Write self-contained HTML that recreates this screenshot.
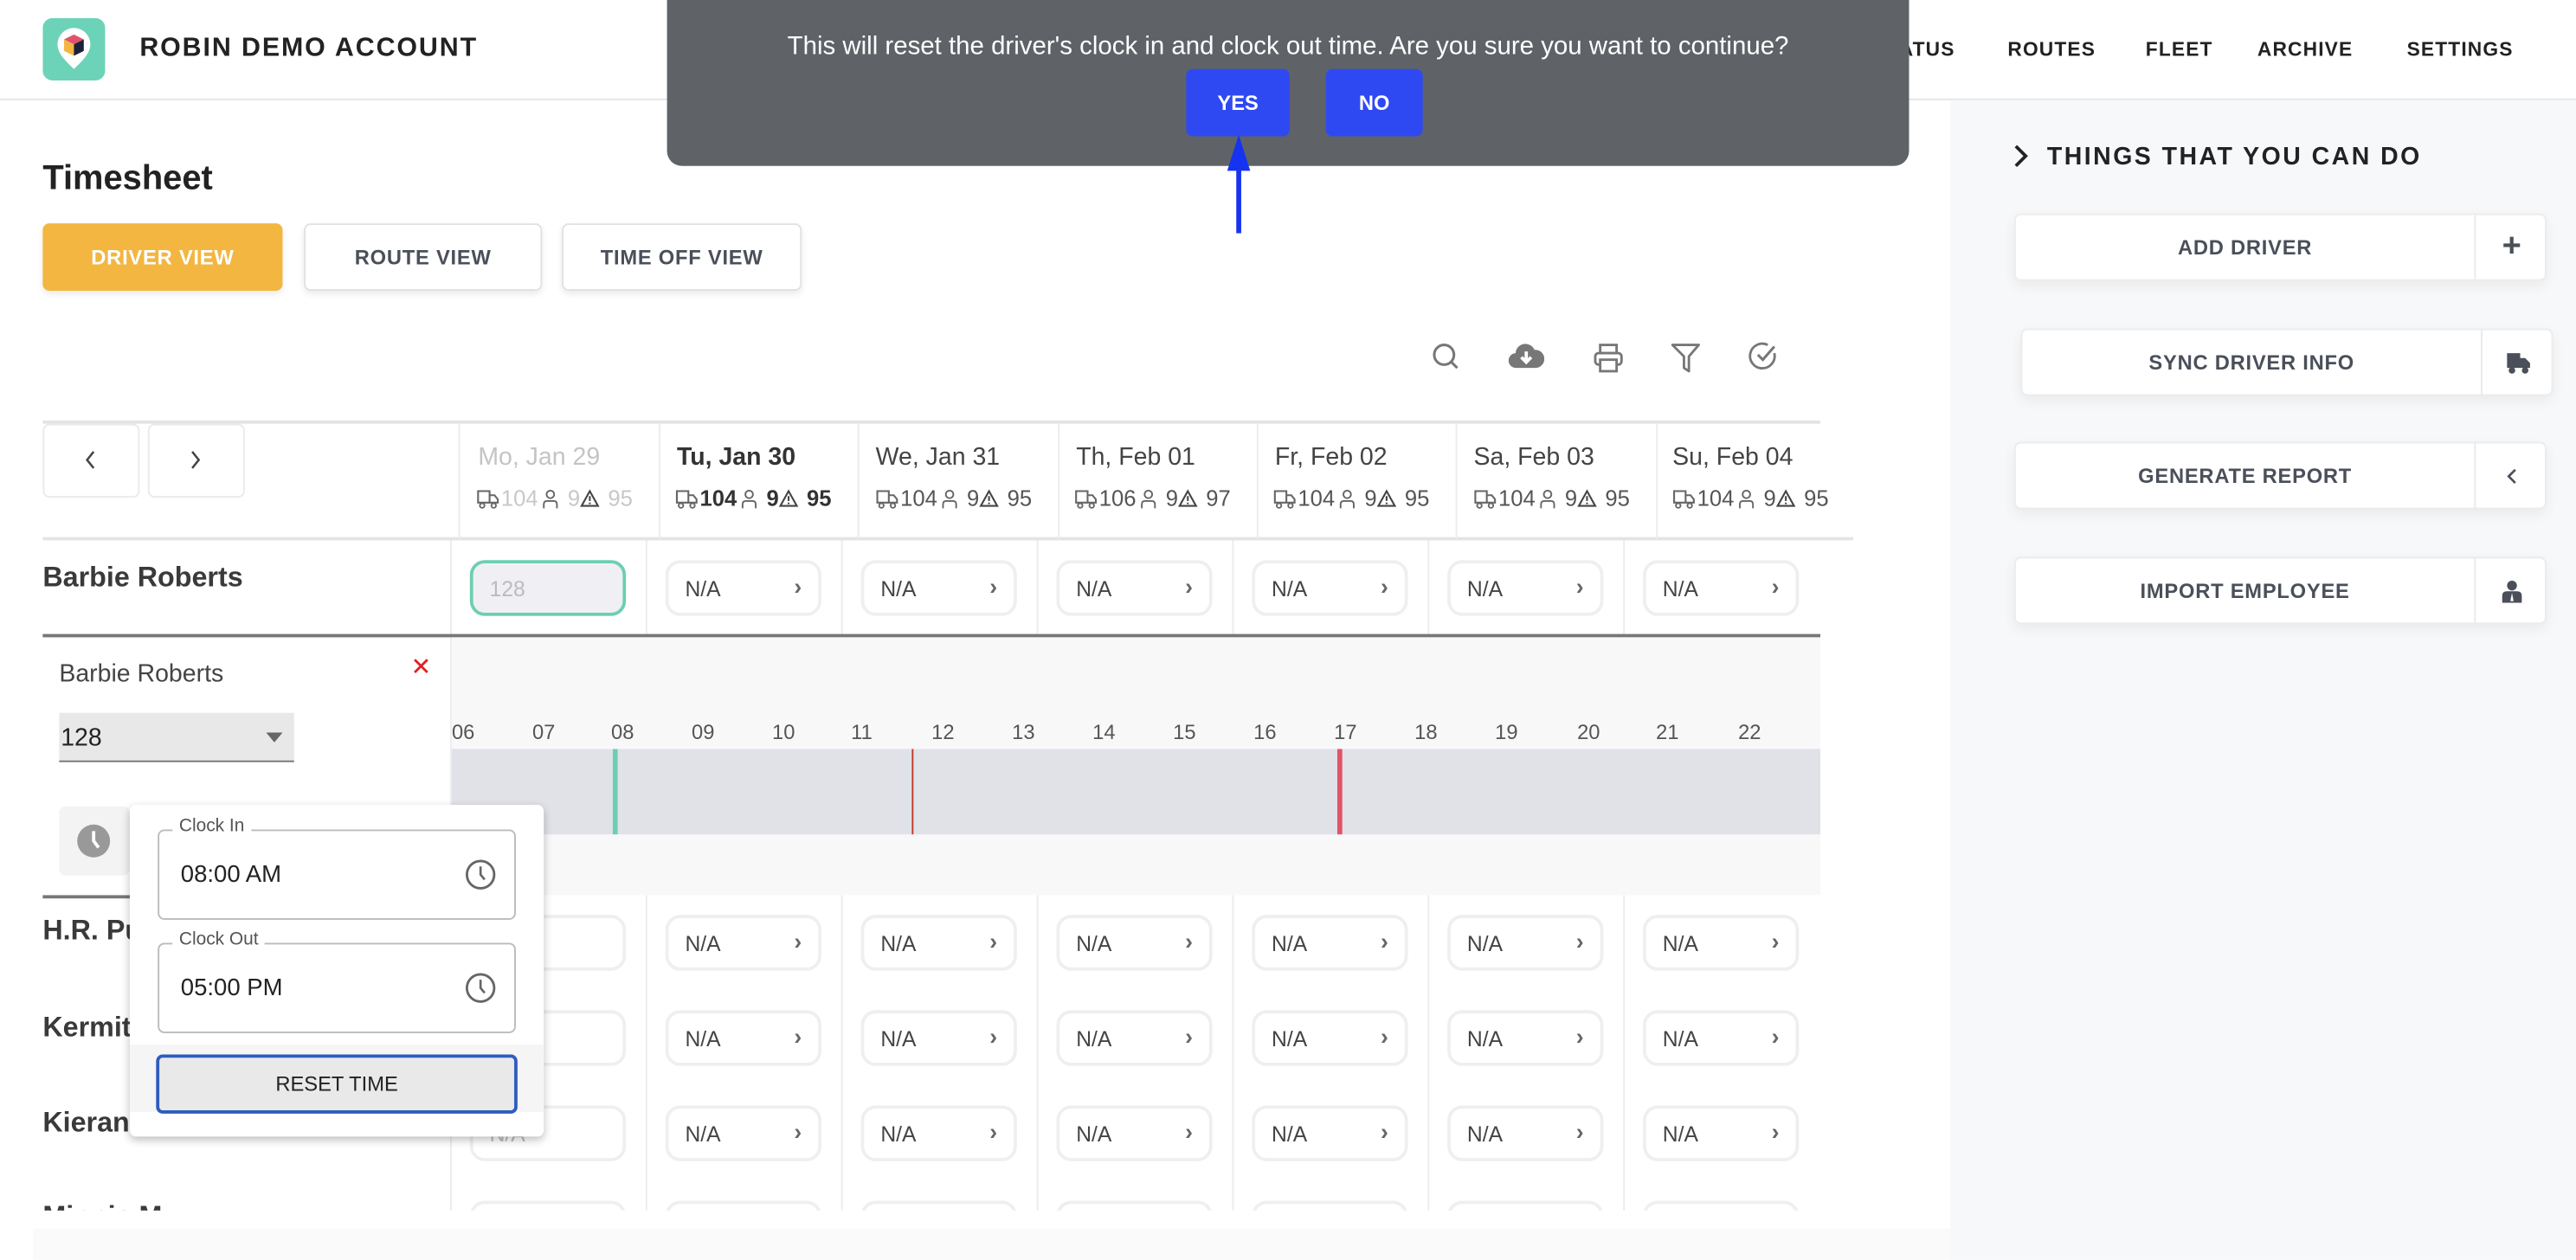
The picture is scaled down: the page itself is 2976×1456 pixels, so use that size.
<!DOCTYPE html>
<html><head><meta charset="utf-8">
<style>
*{margin:0;padding:0;box-sizing:border-box}
html,body{width:2976px;height:1455px;overflow:hidden;background:#fff}
#w{position:absolute;left:0;top:0;width:1568px;height:767px;transform:scale(1.8980);transform-origin:0 0;font-family:"Liberation Sans",sans-serif;color:#333}
.a{position:absolute}
.nav{font-size:12px;font-weight:bold;letter-spacing:.6px;color:#222;top:23px}
.btn{position:absolute;height:41px;border:1px solid #e2e2e2;border-radius:4px;background:#fff;font-size:12.5px;font-weight:bold;color:#4a4f5a;letter-spacing:.4px;display:flex;align-items:center;justify-content:center;box-shadow:0 2px 4px rgba(0,0,0,.08)}
.side{position:absolute;left:1226px;width:324px;height:41px;background:#fff;border:1px solid #ececec;border-radius:4px;box-shadow:0 3px 8px rgba(0,0,0,.06);font-size:12.5px;font-weight:bold;color:#4a4f5a;letter-spacing:.4px}
.side .t{position:absolute;left:0;width:279px;top:13px;text-align:center}
.side .d{position:absolute;left:279px;top:0;width:1px;height:100%;background:#eaeaea}
.side .i{position:absolute;left:280px;width:44px;top:0;height:100%;display:flex;align-items:center;justify-content:center}
.hd{position:absolute;top:270px;font-size:15px;color:#444}
.st{position:absolute;top:296px;font-size:13.5px;color:#555;white-space:nowrap;display:flex;align-items:center}
.st svg{margin-right:1px}
.st i{display:inline-block;width:4px}
.cell{position:absolute;width:95px;height:34px;border:2px solid #efeff2;border-radius:9px;background:#fff;font-size:13px;color:#444}
.cell span{position:absolute;left:10px;top:8px}
.cell b{position:absolute;right:10px;top:6px;font-size:14px;color:#666}
.vl{position:absolute;width:1px;background:#ececec}
.hr{position:absolute;top:439px;font-size:12.5px;color:#555}
.nm{position:absolute;left:26px;font-size:17px;font-weight:bold;color:#3a3a3a}
</style></head><body><div id="w">
<!-- header -->
<svg class="a" style="left:26px;top:11px" width="38" height="38" viewBox="0 0 38 38"><rect width="38" height="38" rx="6" fill="#6dd3b8"/><path d="M19 31 C15 27 9 22 9 16 A10 10 0 0 1 29 16 C29 22 23 27 19 31Z" fill="#fff"/><path d="M19 10 L25 13 L19 16 L13 13Z" fill="#e0536a"/><path d="M13 13 L19 16 L19 23 L13 20Z" fill="#f3b641"/><path d="M25 13 L19 16 L19 23 L25 20Z" fill="#1a2238"/></svg>
<div class="a" style="left:85px;top:21px;font-size:16px;font-weight:bold;letter-spacing:1px;color:#222">ROBIN DEMO ACCOUNT</div>
<div class="a nav" style="right:378px">STATUS</div>
<div class="a nav" style="left:1222px">ROUTES</div>
<div class="a nav" style="left:1306px">FLEET</div>
<div class="a nav" style="left:1374px">ARCHIVE</div>
<div class="a nav" style="left:1465px">SETTINGS</div>
<div class="a" style="left:0;top:60px;width:1568px;height:1px;background:#e4e4e4"></div>
<!-- right panel -->
<div class="a" style="left:1187px;top:61px;width:381px;height:706px;background:#f7f8fa"></div>
<svg class="a" style="left:1225px;top:88px" width="10" height="14" viewBox="0 0 10 14"><path d="M2 1 L8 7 L2 13" stroke="#222" stroke-width="2" fill="none"/></svg>
<div class="a" style="left:1246px;top:87px;font-size:15px;font-weight:bold;letter-spacing:1.3px;color:#222">THINGS THAT YOU CAN DO</div>
<div class="side" style="top:130px"><div class="t">ADD DRIVER</div><div class="d"></div><div class="i"><span style="font-size:20px;color:#4a4f5a;font-weight:bold">+</span></div></div>
<div class="side" style="top:200px;left:1230px"><div class="t">SYNC DRIVER INFO</div><div class="d"></div><div class="i"><svg width="16" height="14" viewBox="0 0 16 14"><path d="M1 1 H9 V10 H1Z M9 4 H12 L15 7 V10 H9Z" fill="#4a4f5a"/><circle cx="4" cy="11.5" r="2" fill="#4a4f5a"/><circle cx="12" cy="11.5" r="2" fill="#4a4f5a"/></svg></div></div>
<div class="side" style="top:269px"><div class="t">GENERATE REPORT</div><div class="d"></div><div class="i"><svg width="8" height="12"><path d="M6 2 L2 6 L6 10" stroke="#4a4f5a" stroke-width="1.4" fill="none"/></svg></div></div>
<div class="side" style="top:339px"><div class="t">IMPORT EMPLOYEE</div><div class="d"></div><div class="i"><svg width="12" height="14" viewBox="0 0 12 14"><circle cx="6" cy="3.5" r="3" fill="#4a4f5a"/><path d="M0 14 V10 Q0 7 3 7 H9 Q12 7 12 10 V14Z" fill="#4a4f5a"/><path d="M6 8 L5 13 L7 13Z" fill="#fff"/></svg></div></div>
<!-- title & view buttons -->
<div class="a" style="left:26px;top:97px;font-size:21px;font-weight:bold;color:#222">Timesheet</div>
<div class="btn" style="left:26px;top:136px;width:146px;background:#f3b641;border-color:#f3b641;color:#fff">DRIVER VIEW</div>
<div class="btn" style="left:185px;top:136px;width:145px">ROUTE VIEW</div>
<div class="btn" style="left:342px;top:136px;width:146px">TIME OFF VIEW</div>
<!-- toolbar icons -->
<svg class="a" style="left:871px;top:208px" width="18" height="18" viewBox="0 0 18 18"><circle cx="8" cy="8" r="6" stroke="#777" stroke-width="1.6" fill="none"/><path d="M12.5 12.5 L16 16" stroke="#777" stroke-width="1.6"/></svg>
<svg class="a" style="left:918px;top:208px" width="22" height="17" viewBox="0 0 22 17"><path d="M5 16 A4.5 4.5 0 0 1 4.5 7 A6 6 0 0 1 16 5 A5.5 5.5 0 0 1 17 16Z" fill="#777"/><path d="M11 6 V12 M8 9.5 L11 12.5 L14 9.5" stroke="#fff" stroke-width="2" fill="none"/></svg>
<svg class="a" style="left:970px;top:209px" width="18" height="18" viewBox="0 0 18 18"><rect x="4" y="1" width="10" height="5" stroke="#777" stroke-width="1.5" fill="none"/><rect x="1" y="6" width="16" height="7" rx="2" stroke="#777" stroke-width="1.5" fill="none"/><rect x="4" y="10" width="10" height="7" stroke="#777" stroke-width="1.5" fill="#fff"/></svg>
<svg class="a" style="left:1017px;top:209px" width="18" height="18" viewBox="0 0 18 18"><path d="M1 1 H17 L11 8 V17 L8 15 V8Z" stroke="#777" stroke-width="1.5" fill="none" stroke-linejoin="round"/></svg>
<svg class="a" style="left:1064px;top:208px" width="18" height="18" viewBox="0 0 18 18"><path d="M16 7 A7.5 7.5 0 1 1 12 2" stroke="#777" stroke-width="1.5" fill="none"/><path d="M6 8 L9 11 L16 3" stroke="#777" stroke-width="1.6" fill="none"/></svg>
<!-- table header -->
<div class="a" style="left:26px;top:256px;width:1082px;height:2px;background:#e4e4e4"></div>
<div class="a" style="left:26px;top:327px;width:1102px;height:2px;background:#e4e4e4"></div>
<div class="a" style="left:26px;top:258px;width:59px;height:45px;border:1px solid #eaeaea;border-radius:4px"></div>
<div class="a" style="left:90px;top:258px;width:59px;height:45px;border:1px solid #eaeaea;border-radius:4px"></div>
<svg class="a" style="left:50px;top:273px" width="10" height="14"><path d="M7 2 L3 7 L7 12" stroke="#444" stroke-width="1.3" fill="none"/></svg>
<svg class="a" style="left:114px;top:273px" width="10" height="14"><path d="M3 2 L7 7 L3 12" stroke="#444" stroke-width="1.3" fill="none"/></svg>
<div class="vl" style="left:279px;top:258px;height:70px"></div>
<div class="vl" style="left:401px;top:258px;height:70px"></div>
<div class="vl" style="left:522px;top:258px;height:70px"></div>
<div class="vl" style="left:644px;top:258px;height:70px"></div>
<div class="vl" style="left:765px;top:258px;height:70px"></div>
<div class="vl" style="left:886px;top:258px;height:70px"></div>
<div class="vl" style="left:1008px;top:258px;height:70px"></div>

<div class="hd" style="left:291px;color:#c4c4c4">Mo, Jan 29</div>
<div class="hd" style="left:412px;font-weight:bold;color:#333">Tu, Jan 30</div>
<div class="hd" style="left:533px">We, Jan 31</div>
<div class="hd" style="left:655px">Th, Feb 01</div>
<div class="hd" style="left:776px">Fr, Feb 02</div>
<div class="hd" style="left:897px">Sa, Feb 03</div>
<div class="hd" style="left:1018px">Su, Feb 04</div>

<svg width="0" height="0" style="position:absolute"><defs>
<symbol id="tk" viewBox="0 0 14 12"><path d="M1 1 H8 V8 H1Z M8 3.5 H11 L13 6 V8 H8" stroke="#666" stroke-width="1.1" fill="none"/><circle cx="3.5" cy="9.8" r="1.4" stroke="#666" stroke-width="1" fill="none"/><circle cx="10.5" cy="9.8" r="1.4" stroke="#666" stroke-width="1" fill="none"/></symbol>
<symbol id="pr" viewBox="0 0 10 12"><circle cx="5" cy="3" r="2.3" stroke="#666" stroke-width="1" fill="none"/><path d="M1 11.5 V9 Q1 7 3 7 H7 Q9 7 9 9 V11.5" stroke="#666" stroke-width="1" fill="none"/></symbol>
<symbol id="wn" viewBox="0 0 12 11"><path d="M6 1 L11 10 H1Z" stroke="#444" stroke-width="1.1" fill="none"/><path d="M6 4 V7 M6 8 V9" stroke="#444" stroke-width="1.1"/></symbol>
</defs></svg>
<div class="st" style="left:290px;color:#c8c8c8"><svg width="14" height="12"><use href="#tk"/></svg>104<svg width="10" height="12" style="margin:0 2px"><use href="#pr"/></svg><i></i>9<svg width="12" height="11"><use href="#wn"/></svg><i></i>95</div>
<div class="st" style="left:411px;font-weight:bold;color:#333"><svg width="14" height="12"><use href="#tk"/></svg>104<svg width="10" height="12" style="margin:0 2px"><use href="#pr"/></svg><i></i>9<svg width="12" height="11"><use href="#wn"/></svg><i></i>95</div>
<div class="st" style="left:533px"><svg width="14" height="12"><use href="#tk"/></svg>104<svg width="10" height="12" style="margin:0 2px"><use href="#pr"/></svg><i></i>9<svg width="12" height="11"><use href="#wn"/></svg><i></i>95</div>
<div class="st" style="left:654px"><svg width="14" height="12"><use href="#tk"/></svg>106<svg width="10" height="12" style="margin:0 2px"><use href="#pr"/></svg><i></i>9<svg width="12" height="11"><use href="#wn"/></svg><i></i>97</div>
<div class="st" style="left:775px"><svg width="14" height="12"><use href="#tk"/></svg>104<svg width="10" height="12" style="margin:0 2px"><use href="#pr"/></svg><i></i>9<svg width="12" height="11"><use href="#wn"/></svg><i></i>95</div>
<div class="st" style="left:897px"><svg width="14" height="12"><use href="#tk"/></svg>104<svg width="10" height="12" style="margin:0 2px"><use href="#pr"/></svg><i></i>9<svg width="12" height="11"><use href="#wn"/></svg><i></i>95</div>
<div class="st" style="left:1018px"><svg width="14" height="12"><use href="#tk"/></svg>104<svg width="10" height="12" style="margin:0 2px"><use href="#pr"/></svg><i></i>9<svg width="12" height="11"><use href="#wn"/></svg><i></i>95</div>

<!-- body vertical lines -->
<div class="vl" style="left:274px;top:329px;height:408px"></div>
<div class="vl" style="left:393px;top:329px;height:58px"></div><div class="vl" style="left:512px;top:329px;height:58px"></div><div class="vl" style="left:631px;top:329px;height:58px"></div><div class="vl" style="left:750px;top:329px;height:58px"></div><div class="vl" style="left:869px;top:329px;height:58px"></div><div class="vl" style="left:988px;top:329px;height:58px"></div>
<div class="vl" style="left:393px;top:545px;height:192px"></div><div class="vl" style="left:512px;top:545px;height:192px"></div><div class="vl" style="left:631px;top:545px;height:192px"></div><div class="vl" style="left:750px;top:545px;height:192px"></div><div class="vl" style="left:869px;top:545px;height:192px"></div><div class="vl" style="left:988px;top:545px;height:192px"></div>

<!-- Barbie row -->
<div class="nm" style="top:342px">Barbie Roberts</div>
<div class="cell" style="left:286px;top:341px;border-color:#6dcfb2;background:#f0f0f4"><span style="color:#bbb">128</span></div>
<div class="cell" style="left:405px;top:341px"><span>N/A</span><b>›</b></div>
<div class="cell" style="left:524px;top:341px"><span>N/A</span><b>›</b></div>
<div class="cell" style="left:643px;top:341px"><span>N/A</span><b>›</b></div>
<div class="cell" style="left:762px;top:341px"><span>N/A</span><b>›</b></div>
<div class="cell" style="left:881px;top:341px"><span>N/A</span><b>›</b></div>
<div class="cell" style="left:1000px;top:341px"><span>N/A</span><b>›</b></div>
<div class="a" style="left:26px;top:386px;width:1082px;height:1.5px;background:#777"></div>

<!-- expanded -->
<div class="a" style="left:275px;top:388px;width:833px;height:157px;background:#f8f8f9"></div>
<div class="a" style="left:275px;top:456px;width:833px;height:52px;background:#e1e2e8"></div>
<div class="a" style="left:373px;top:456px;width:3px;height:52px;background:#6dcfb2"></div>
<div class="a" style="left:555px;top:456px;width:1px;height:52px;background:#c0392b"></div>
<div class="a" style="left:814px;top:456px;width:3px;height:52px;background:#e0536a"></div>
<div class="hr" style="left:275px">06</div><div class="hr" style="left:324px">07</div><div class="hr" style="left:372px">08</div><div class="hr" style="left:421px">09</div><div class="hr" style="left:470px">10</div><div class="hr" style="left:518px">11</div><div class="hr" style="left:567px">12</div><div class="hr" style="left:616px">13</div><div class="hr" style="left:665px">14</div><div class="hr" style="left:714px">15</div><div class="hr" style="left:763px">16</div><div class="hr" style="left:812px">17</div><div class="hr" style="left:861px">18</div><div class="hr" style="left:910px">19</div><div class="hr" style="left:960px">20</div><div class="hr" style="left:1008px">21</div><div class="hr" style="left:1058px">22</div>

<div class="a" style="left:36px;top:402px;font-size:15px;color:#444">Barbie Roberts</div>
<div class="a" style="left:250px;top:397px;font-size:15px;color:#e02020">✕</div>
<div class="a" style="left:36px;top:434px;width:143px;height:30px;background:#e8e8e8;border-bottom:1.5px solid #777"></div>
<div class="a" style="left:37px;top:441px;font-size:15px;color:#222">128</div>
<svg class="a" style="left:162px;top:446px" width="10" height="7"><path d="M0 0 H10 L5 6Z" fill="#666"/></svg>
<div class="a" style="left:36px;top:491px;width:43px;height:42px;background:#f3f3f3;border-radius:4px"></div>
<svg class="a" style="left:46px;top:501px" width="22" height="22" viewBox="0 0 22 22"><circle cx="11" cy="11" r="10" fill="#999"/><path d="M11 5 V11 L14 15" stroke="#fff" stroke-width="2" fill="none"/></svg>
<div class="a" style="left:26px;top:545px;width:249px;height:1.5px;background:#777"></div>

<!-- other rows -->
<div class="nm" style="top:557px">H.R. Puff</div>
<div class="nm" style="top:616px">Kermit</div>
<div class="nm" style="top:674px">Kieran</div>
<div class="nm" style="top:731px">Minnie M</div>
<div class="cell" style="left:286px;top:557px"></div>
<div class="cell" style="left:405px;top:557px"><span>N/A</span><b>›</b></div><div class="cell" style="left:524px;top:557px"><span>N/A</span><b>›</b></div><div class="cell" style="left:643px;top:557px"><span>N/A</span><b>›</b></div><div class="cell" style="left:762px;top:557px"><span>N/A</span><b>›</b></div><div class="cell" style="left:881px;top:557px"><span>N/A</span><b>›</b></div><div class="cell" style="left:1000px;top:557px"><span>N/A</span><b>›</b></div>
<div class="cell" style="left:286px;top:615px"></div>
<div class="cell" style="left:405px;top:615px"><span>N/A</span><b>›</b></div><div class="cell" style="left:524px;top:615px"><span>N/A</span><b>›</b></div><div class="cell" style="left:643px;top:615px"><span>N/A</span><b>›</b></div><div class="cell" style="left:762px;top:615px"><span>N/A</span><b>›</b></div><div class="cell" style="left:881px;top:615px"><span>N/A</span><b>›</b></div><div class="cell" style="left:1000px;top:615px"><span>N/A</span><b>›</b></div>
<div class="cell" style="left:286px;top:673px"><span style="color:#bbb">N/A</span></div>
<div class="cell" style="left:405px;top:673px"><span>N/A</span><b>›</b></div><div class="cell" style="left:524px;top:673px"><span>N/A</span><b>›</b></div><div class="cell" style="left:643px;top:673px"><span>N/A</span><b>›</b></div><div class="cell" style="left:762px;top:673px"><span>N/A</span><b>›</b></div><div class="cell" style="left:881px;top:673px"><span>N/A</span><b>›</b></div><div class="cell" style="left:1000px;top:673px"><span>N/A</span><b>›</b></div>
<div class="cell" style="left:286px;top:731px"></div><div class="cell" style="left:405px;top:731px"></div><div class="cell" style="left:524px;top:731px"></div><div class="cell" style="left:643px;top:731px"></div><div class="cell" style="left:762px;top:731px"></div><div class="cell" style="left:881px;top:731px"></div><div class="cell" style="left:1000px;top:731px"></div>
<div class="a" style="left:0;top:737px;width:1187px;height:30px;background:#fff"></div>
<div class="a" style="left:20px;top:748px;width:1167px;height:19px;background:#fafafa"></div>

<!-- popup -->
<div class="a" style="left:79px;top:490px;width:252px;height:202px;background:#fff;border-radius:4px;box-shadow:0 2px 5px rgba(0,0,0,.25)"></div>
<div class="a" style="left:96px;top:505px;width:218px;height:55px;border:1px solid #bbb;border-radius:4px"></div>
<div class="a" style="left:105px;top:497px;padding:0 4px;background:#fff;font-size:11px;color:#555">Clock In</div>
<div class="a" style="left:110px;top:525px;font-size:14.5px;color:#222">08:00 AM</div>
<svg class="a" style="left:283px;top:523px" width="19" height="19" viewBox="0 0 19 19"><circle cx="9.5" cy="9.5" r="8.3" stroke="#666" stroke-width="1.5" fill="none"/><path d="M9.5 4.5 V9.5 L12 12.5" stroke="#666" stroke-width="1.4" fill="none"/></svg>
<div class="a" style="left:96px;top:574px;width:218px;height:55px;border:1px solid #bbb;border-radius:4px"></div>
<div class="a" style="left:105px;top:566px;padding:0 4px;background:#fff;font-size:11px;color:#555">Clock Out</div>
<div class="a" style="left:110px;top:594px;font-size:14.5px;color:#222">05:00 PM</div>
<svg class="a" style="left:283px;top:592px" width="19" height="19" viewBox="0 0 19 19"><circle cx="9.5" cy="9.5" r="8.3" stroke="#666" stroke-width="1.5" fill="none"/><path d="M9.5 4.5 V9.5 L12 12.5" stroke="#666" stroke-width="1.4" fill="none"/></svg>
<div class="a" style="left:79px;top:636px;width:252px;height:41px;background:#f5f5f5"></div>
<div class="a" style="left:95px;top:642px;width:220px;height:36px;background:#e9e9e9;border:2px solid #2e5cbf;border-radius:4px;font-size:12.5px;color:#222;display:flex;align-items:center;justify-content:center">RESET TIME</div>

<!-- modal -->
<div class="a" style="left:406px;top:0;width:756px;height:101px;background:#5f6368;border-radius:0 0 9px 9px"></div>
<div class="a" style="left:406px;top:20px;width:756px;text-align:center;font-size:15.5px;color:#fff">This will reset the driver's clock in and clock out time. Are you sure you want to continue?</div>
<div class="a" style="left:722px;top:42px;width:63px;height:41px;background:#2f49f2;border-radius:4px;color:#fff;font-size:12.5px;font-weight:bold;display:flex;align-items:center;justify-content:center">YES</div>
<div class="a" style="left:807px;top:42px;width:59px;height:41px;background:#2f49f2;border-radius:4px;color:#fff;font-size:12.5px;font-weight:bold;display:flex;align-items:center;justify-content:center">NO</div>
<svg class="a" style="left:744px;top:80px" width="20" height="64" viewBox="0 0 20 64"><path d="M10 2 L17 24 H3Z" fill="#1533f0"/><rect x="8.5" y="22" width="3" height="40" fill="#1533f0"/></svg>
</div></body></html>
